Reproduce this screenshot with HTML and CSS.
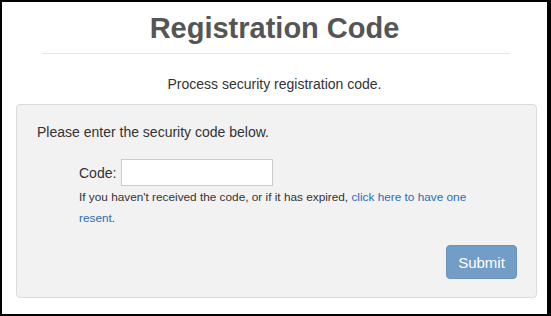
FILE: index.html
```html
<!DOCTYPE html>
<html>
<head>
<meta charset="utf-8">
<link rel="stylesheet" href="styles.css">
</head>
<body>
<div class="frame">
  <h1 class="title">Registration Code</h1>
  <hr class="rule">
  <p class="lead">Process security registration code.</p>
  <div class="panel">
    <p class="intro">Please enter the security code below.</p>
    <div class="form">
      <div class="row">
        <label class="label" for="code">Code:</label>
        <input class="input" id="code" type="text">
      </div>
      <p class="help">If you haven't received the code, or if it has expired, <a class="link" href="#">click here to have one resent</a>.</p>
    </div>
    <div class="actions">
      <button class="btn" type="button">Submit</button>
    </div>
  </div>
</div>
</body>
</html>
```
FILE: styles.css
```css
html, body {
  margin: 0;
  padding: 0;
  background: #000;
}
body {
  padding: 2px 4px 2px 2px;
  font-family: "Liberation Sans", Arial, sans-serif;
  color: #333;
}
.frame {
  background: #fff;
  height: 312px;
  box-sizing: border-box;
  padding: 1px 0 0 0;
  overflow: hidden;
}
.title {
  margin: 7px 0 0 0;
  text-align: center;
  font-size: 29px;
  line-height: 36px;
  font-weight: bold;
  color: #555;
}
.rule {
  margin: 7px 37px 0 40px;
  border: 0;
  border-top: 1px solid #e6e6e6;
  height: 0;
}
.lead {
  margin: 20px 0 0 0;
  text-align: center;
  font-size: 14px;
  line-height: 20px;
}
.panel {
  margin: 10px 10px 0 14px;
  background: #f2f2f2;
  border: 1px solid #dcdcdc;
  border-radius: 4px;
  padding: 17px 20px 19px 20px;
  height: 194px;
  box-sizing: border-box;
}
.intro {
  margin: 0;
  font-size: 14px;
  line-height: 20px;
}
.form {
  margin: 17px 0 0 42px;
}
.row {
  display: flex;
  align-items: center;
  gap: 4px;
}
.label {
  font-size: 14px;
}
.input {
  width: 152px;
  height: 27px;
  box-sizing: border-box;
  border: 1px solid #ccc;
  background: #fff;
  margin: 0 0 0 1px;
  padding: 0 4px;
}
.help {
  margin: 1px 0 0 0;
  font-size: 11.8px;
  line-height: 21px;
  width: 395px;
}
.link {
  color: #2b6db3;
  text-decoration: none;
}
.actions {
  display: flex;
  justify-content: flex-end;
  margin-top: 16px;
}
.btn {
  background: #729dc6;
  border: 1px solid #6a92ba;
  border-radius: 4px;
  color: #fff;
  font-family: "Liberation Sans", Arial, sans-serif;
  font-size: 15px;
  width: 71px;
  height: 34px;
  padding: 0;
  margin-right: -1px;
}
```
